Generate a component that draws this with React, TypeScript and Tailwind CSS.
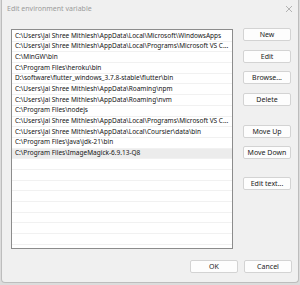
import React from 'react';

const paths = [
    'C:\\Users\\Jai Shree Mithlesh\\AppData\\Local\\Microsoft\\WindowsApps',
    'C:\\Users\\Jai Shree Mithlesh\\AppData\\Local\\Programs\\Microsoft VS C...',
    'C:\\MinGW\\bin',
    'C:\\Program Files\\heroku\\bin',
    'D:\\software\\flutter_windows_3.7.8-stable\\flutter\\bin',
    'C:\\Users\\Jai Shree Mithlesh\\AppData\\Roaming\\npm',
    'C:\\Users\\Jai Shree Mithlesh\\AppData\\Roaming\\nvm',
    'C:\\Program Files\\nodejs',
    'C:\\Users\\Jai Shree Mithlesh\\AppData\\Local\\Programs\\Microsoft VS C...',
    'C:\\Users\\Jai Shree Mithlesh\\AppData\\Local\\Coursier\\data\\bin',
    'C:\\Program Files\\Java\\jdk-21\\bin',
    'C:\\Program Files\\ImageMagick-6.9.13-Q8',
];

const SELECTED = 11;
const EMPTY_ROWS = 8;

const DlgButton: React.FC<{ label: string; className?: string }> = ({ label, className = '' }) => (
    <button
        className={`w-[48px] h-[13px] flex items-center justify-center bg-[#fdfdfd] border border-[#d3d3d3] rounded-[2px] text-[7px] leading-none text-[#1b1b1b] ${className}`}
    >
        {label}
    </button>
);

export default function App() {
    return (
        <div className="w-[300px] h-[285px] bg-[#dcdcdc] pl-[1px] font-['Noto_Sans',sans-serif]">
            <div className="w-[298px] h-[283px] bg-[#f0f0f0] border border-[#bdbdbd] border-t-0 rounded-b-[4px] flex flex-col">
                {/* title bar */}
                <div className="h-[17px] flex items-center justify-between pl-[5px] pr-[4px] pt-[1px]">
                    <span className="text-[7px] text-[#9b9b9b]">Edit environment variable</span>
                    <svg width="8" height="8" viewBox="0 0 8 8" className="mr-[1px]">
                        <path d="M1 1L7 7M7 1L1 7" stroke="#a3a3a3" strokeWidth="0.8" />
                    </svg>
                </div>

                <div className="flex pl-[9px] pt-[12px]">
                    {/* path list */}
                    <div className="w-[222px] h-[220px] bg-white border border-[#8c8c8c] overflow-hidden pt-[1px]">
                        {paths.map((p, i) => (
                            <div
                                key={i}
                                className={`h-[10.7px] flex items-center pl-[3px] text-[6.5px] leading-none text-[#141414] whitespace-nowrap border-b border-[#f1f1f1] ${
                                    i === SELECTED ? 'bg-[#ececec]' : ''
                                }`}
                            >
                                {p}
                            </div>
                        ))}
                        {Array.from({ length: EMPTY_ROWS }).map((_, i) => (
                            <div key={`e${i}`} className="h-[10.7px] border-b border-[#f1f1f1]" />
                        ))}
                    </div>

                    {/* side buttons */}
                    <div className="flex flex-col ml-[10px] -mt-[1px]">
                        <DlgButton label="New" />
                        <DlgButton label="Edit" className="mt-[8.5px]" />
                        <DlgButton label="Browse..." className="mt-[8.5px]" />
                        <DlgButton label="Delete" className="mt-[9px]" />
                        <DlgButton label="Move Up" className="mt-[18.5px]" />
                        <DlgButton label="Move Down" className="mt-[8px]" />
                        <DlgButton label="Edit text..." className="mt-[18.5px]" />
                    </div>
                </div>

                {/* footer */}
                <div className="flex justify-end gap-[6px] pr-[6px] mt-[11px]">
                    <DlgButton label="OK" />
                    <DlgButton label="Cancel" />
                </div>
            </div>
        </div>
    );
}
